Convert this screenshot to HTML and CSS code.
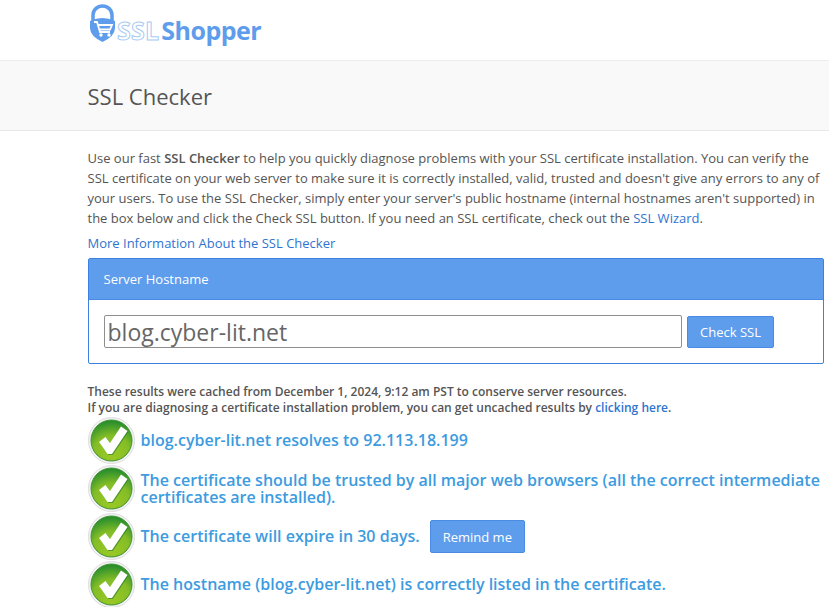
FILE: index.html
```html
<!DOCTYPE html>
<html lang="en">

<head>
    <meta charset="UTF-8">
    <title>SSL Checker</title>
    <link rel="stylesheet" href="styles.css">
</head>

<body>
    <svg class="defs" width="0" height="0">
        <defs>
            <radialGradient id="ball" cx="50%" cy="85%" r="85%">
                <stop offset="0" stop-color="#9ac925" />
                <stop offset="0.55" stop-color="#84bd26" />
                <stop offset="1" stop-color="#1f8a2e" />
            </radialGradient>
            <symbol id="check" viewBox="0 0 47 47">
                <circle cx="23.5" cy="23.5" r="23" fill="#f3f3f3" stroke="#dcdcdc" />
                <circle cx="23.5" cy="23.5" r="20.5" fill="url(#ball)" stroke="#3f9130" stroke-width="1" />
                <path d="M11 25 L17.500 20 L22 26 L33 9.500 L39.500 14 L24 37 L19.500 37Z" fill="#1f7a2c" opacity="0.6" transform="translate(0.8 1)" />
                <path d="M11 25 L17.500 20 L22 26 L33 9.500 L39.500 14 L24 37 L19.500 37Z" fill="#fff" />
            </symbol>
        </defs>
    </svg>

    <header class="top">
        <div class="container">
            <a class="logo" href="javascript:;">
                <svg class="logo_mark" width="28" height="43" viewBox="0 0 28 43">
                    <path d="M4 21 V15 A9.500 9 0 0 1 23 15 V21" fill="none" stroke="#5e9cec" stroke-width="3.500" />
                    <path d="M1 21 Q13.500 15 26 21 V28 Q26 36 13.500 42 Q1 36 1 28Z" fill="#5e9cec" />
                    <path d="M5 22 H8 L11 32 H21 M9 25 H23 L21 29.500 H10" fill="none" stroke="#fff" stroke-width="1.800" />
                    <circle cx="12" cy="35" r="1.700" fill="#fff" />
                    <circle cx="20" cy="35" r="1.700" fill="#fff" />
                </svg>
                <span class="logo_ssl">SSL</span><span class="logo_shop">Shopper</span>
            </a>
        </div>
    </header>

    <div class="title_band">
        <div class="container">
            <h1>SSL Checker</h1>
        </div>
    </div>

    <main class="container">
        <p class="intro">Use our fast <b>SSL Checker</b> to help you quickly diagnose problems with your SSL certificate installation. You can verify the SSL certificate on your web server to make sure it is correctly installed, valid, trusted and doesn't give any errors to any of your users. To use the SSL Checker, simply enter your server's public hostname (internal hostnames aren't supported) in the box below and click the Check SSL button. If you need an SSL certificate, check out the <a href="javascript:;">SSL Wizard</a>.</p>
        <p class="more"><a href="javascript:;">More Information About the SSL Checker</a></p>

        <section class="panel">
            <div class="panel_head">Server Hostname</div>
            <div class="panel_body">
                <input class="host" type="text" value="blog.cyber-lit.net">
                <button class="btn" type="button">Check SSL</button>
            </div>
        </section>

        <p class="cached">These results were cached from December 1, 2024, 9:12 am PST to conserve server resources.<br>If you are diagnosing a certificate installation problem, you can get uncached results by <a href="javascript:;">clicking here</a>.</p>

        <div class="results">
            <div class="result">
                <svg class="tick"><use href="#check" /></svg>
                <h3>blog.cyber-lit.net resolves to 92.113.18.199</h3>
            </div>
            <div class="result">
                <svg class="tick"><use href="#check" /></svg>
                <h3 class="two_line">The certificate should be trusted by all major web browsers (all the correct intermediate certificates are installed).</h3>
            </div>
            <div class="result">
                <svg class="tick"><use href="#check" /></svg>
                <h3>The certificate will expire in 30 days.</h3>
                <button class="btn remind" type="button">Remind me</button>
            </div>
            <div class="result">
                <svg class="tick"><use href="#check" /></svg>
                <h3>The hostname (blog.cyber-lit.net) is correctly listed in the certificate.</h3>
            </div>
        </div>
    </main>
</body>

</html>
```

FILE: styles.css
```css
* {
    margin: 0;
    padding: 0;
    box-sizing: border-box;
}

html,
body {
    height: 607px;
    overflow: hidden;
}

body {
    background: #fff;
    color: #555;
    font-family: "Open Sans", "Liberation Sans", sans-serif;
    font-size: 13px;
    line-height: 20px;
}

a {
    color: #2f74d0;
    text-decoration: none;
}

.defs {
    display: block;
    height: 0;
}

.container {
    width: 736px;
    margin-left: 87.5px;
}

.top {
    height: 61px;
    border-bottom: 1px solid #eee;
}

.logo {
    display: flex;
    align-items: flex-start;
    height: 60px;
    padding-left: 1.5px;
}

.logo_mark {
    flex: none;
}

.logo_ssl,
.logo_shop {
    font-size: 25px;
    line-height: 36px;
    font-weight: 700;
    margin-top: 12px;
}

.logo_ssl {
    color: #fff;
    -webkit-text-stroke: 1px #a9cbf4;
    letter-spacing: 0.2px;
    margin-right: 2px;
}

.logo_shop {
    color: #5e9cec;
    letter-spacing: -0.5px;
}

.title_band {
    height: 70px;
    background: #f9f9f9;
    border-bottom: 1px solid #e8e8e8;
    display: flex;
    align-items: center;
}

h1 {
    font-size: 22px;
    font-weight: 400;
    color: #555;
    line-height: 30px;
}

.intro {
    padding-top: 17px;
}

.intro b {
    font-weight: 600;
}

.more {
    margin-top: 5px;
}

.panel {
    margin-top: 5px;
    border: 1px solid #3c80e0;
    border-radius: 2px;
}

.panel_head {
    height: 41px;
    padding: 0 15px;
    line-height: 40px;
    background: #5e9cec;
    color: #fff;
    border-bottom: 1px solid #4a8be4;
}

.panel_body {
    display: flex;
    align-items: flex-start;
    gap: 5px;
    height: 63px;
    padding: 15px;
}

.host {
    width: 578px;
    height: 33px;
    padding: 0 3px;
    border: 1px solid #8f8f8f;
    border-radius: 2px;
    color: #666;
    font-family: inherit;
    font-size: 23px;
    outline: none;
}

.btn {
    height: 32px;
    margin-top: 1px;
    padding: 0 12.5px;
    background: #5e9cec;
    border: 1px solid #4a8be4;
    border-radius: 2px;
    color: #fff;
    font-family: inherit;
    font-size: 13px;
}

.cached {
    margin-top: 20px;
    font-size: 12px;
    line-height: 16px;
    font-weight: 600;
}

.results {
    display: flex;
    flex-direction: column;
}

.result {
    display: flex;
    align-items: center;
    height: 48px;
}

.tick {
    flex: none;
    width: 47px;
    height: 47px;
    margin-right: 6px;
}

h3 {
    font-size: 16px;
    line-height: 17px;
    font-weight: 600;
    color: #3d9be0;
}

.two_line {
    padding-top: 2px;
}

.remind {
    margin-left: 10px;
    height: 33px;
    padding: 0 12px;
}
```
